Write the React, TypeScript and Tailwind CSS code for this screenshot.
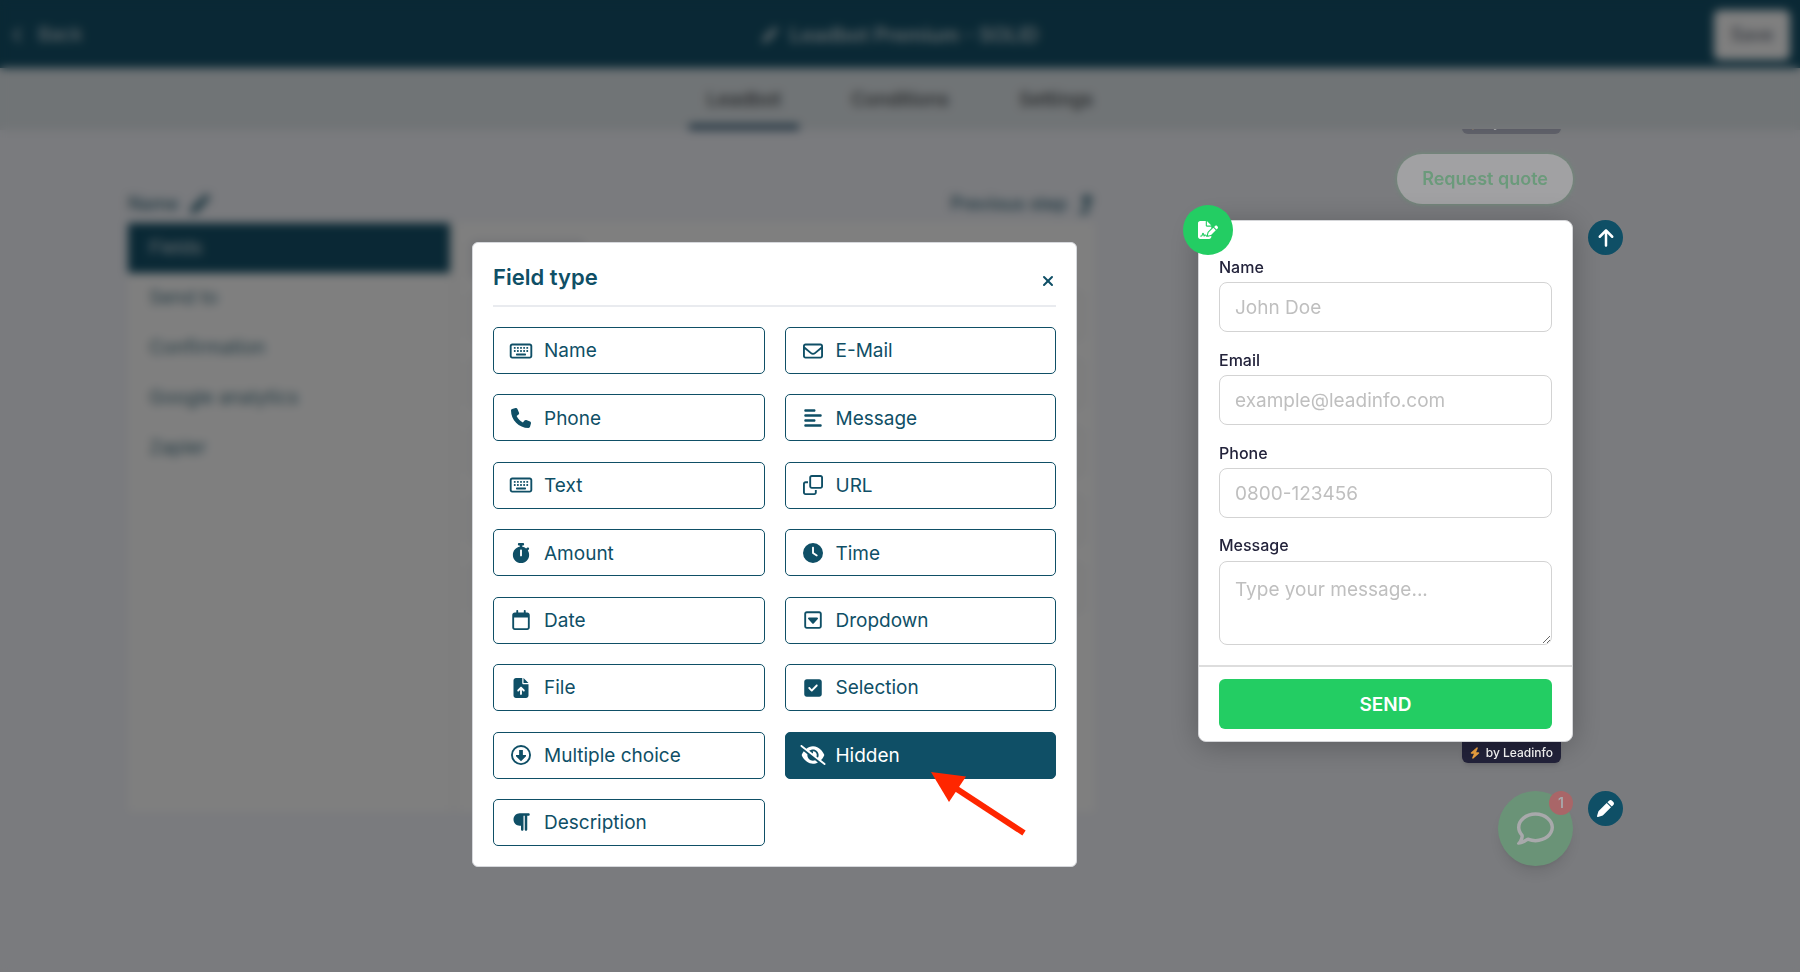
import { useState } from 'react'
import clsx from 'clsx'
import type { IconType } from 'react-icons'
import {
  FaAlignLeft,
  FaArrowUp,
  FaBolt,
  FaChevronLeft,
  FaClock,
  FaEyeSlash,
  FaFileArrowUp,
  FaFileSignature,
  FaParagraph,
  FaPen,
  FaPhone,
  FaRegCalendar,
  FaRegCircleDown,
  FaRegClone,
  FaRegComment,
  FaRegEnvelope,
  FaRegKeyboard,
  FaRegSquareCaretDown,
  FaSquareCheck,
  FaStopwatch,
  FaTurnUp,
} from 'react-icons/fa6'
import { X } from 'lucide-react'

const tabs = ['Leadbot', 'Conditions', 'Settings']

const menuItems = ['Fields', 'Send to', 'Confirmation', 'Google analytics', 'Zapier']

const fieldTypes: { label: string; icon: IconType }[] = [
  { label: 'Name', icon: FaRegKeyboard },
  { label: 'E-Mail', icon: FaRegEnvelope },
  { label: 'Phone', icon: FaPhone },
  { label: 'Message', icon: FaAlignLeft },
  { label: 'Text', icon: FaRegKeyboard },
  { label: 'URL', icon: FaRegClone },
  { label: 'Amount', icon: FaStopwatch },
  { label: 'Time', icon: FaClock },
  { label: 'Date', icon: FaRegCalendar },
  { label: 'Dropdown', icon: FaRegSquareCaretDown },
  { label: 'File', icon: FaFileArrowUp },
  { label: 'Selection', icon: FaSquareCheck },
  { label: 'Multiple choice', icon: FaRegCircleDown },
  { label: 'Hidden', icon: FaEyeSlash },
  { label: 'Description', icon: FaParagraph },
]

const formFields = [
  { id: 'name', label: 'Name', type: 'text', placeholder: 'John Doe' },
  { id: 'email', label: 'Email', type: 'email', placeholder: 'example@leadinfo.com' },
  { id: 'phone', label: 'Phone', type: 'tel', placeholder: '0800-123456' },
]

const Editor = () => (
  <div className="min-h-screen bg-[#f4f6fc] text-[#0f4f66]">
    <header className="flex h-[68px] items-center bg-[#14516a] px-2.5 pt-0.5 text-white">
      <div className="flex-1">
        <button className="flex items-center gap-3 text-[19px] opacity-80">
          <FaChevronLeft className="h-4 w-4" />
          Back
        </button>
      </div>
      <h1 className="flex items-center gap-3 text-xl font-semibold opacity-70">
        <FaPen className="h-4 w-4" />
        Leadbot Premium - SOLID
      </h1>
      <div className="flex flex-1 justify-end">
        <button className="h-[50px] rounded-md bg-white px-[17px] text-lg font-medium text-gray-500">Save</button>
      </div>
    </header>

    <nav className="flex h-[62px] justify-center gap-[34px] bg-[#e1e8ec]">
      {tabs.map((tab, index) => (
        <a
          key={tab}
          href="#"
          className={clsx(
            'flex items-center border-b-6 px-[18px] pt-2 text-[19px] font-medium text-[#4b5054]',
            index === 0 ? 'border-[#3f6580]' : 'border-transparent'
          )}
        >
          {tab}
        </a>
      ))}
    </nav>

    <main className="mr-[705px] ml-[128px] pt-[60px]">
      <div className="flex h-8 items-start justify-between text-lg font-medium opacity-80">
        <span className="flex items-center gap-3">
          Name
          <FaPen className="h-5 w-5" />
        </span>
        <span className="flex items-center gap-3">
          Previous step
          <FaTurnUp className="h-5 w-4" />
        </span>
      </div>
      <div className="flex h-[590px]">
        <ul className="w-[322px] bg-white pt-px text-[19px]">
          {menuItems.map((item, index) => (
            <li
              key={item}
              className={clsx(
                'flex h-[50px] items-center px-[21px]',
                index === 0 ? 'bg-[#14516a] text-white/80' : 'text-[#0f4f66]/80'
              )}
            >
              {item}
            </li>
          ))}
        </ul>
        <div className="flex-1 border-l-8 border-[#fafafa] bg-white px-3 pt-[18px]">
          <div className="h-10 w-[115px] rounded-md bg-[#e6e8ee]" />
          <div className="mt-3 flex flex-col gap-5">
            {menuItems.map(item => (
              <div key={item} className="h-12 rounded-md border-2 border-[#dfe2e8]" />
            ))}
          </div>
        </div>
      </div>
    </main>
  </div>
)

const PoweredBy = () => (
  <span className="mr-3 flex h-[21px] shrink-0 items-center gap-1.5 rounded-b-md bg-[#23233b] px-2 text-xs font-medium text-white shadow-md">
    <FaBolt className="h-3 w-2.5 text-[#f5a742]" />
    by Leadinfo
  </span>
)

const FieldTypeModal = () => {
  const [active, setActive] = useState('Hidden')

  return (
    <section
      role="dialog"
      aria-labelledby="field-type-title"
      className="mt-[242px] h-fit min-w-0 flex-1 rounded-md border border-[#d6d8dc] bg-white px-5 pb-5 text-[#0f4f66]"
    >
      <div className="flex h-16 items-center justify-between border-b-2 border-[#e9ebef] pt-1.5">
        <h2 id="field-type-title" className="text-[22px] font-semibold">Field type</h2>
        <button aria-label="Close" className="pt-2">
          <X size={16} strokeWidth={3} />
        </button>
      </div>

      <div className="mt-5 grid h-[519px] grid-cols-2 content-between gap-x-5">
        {fieldTypes.map(({ label, icon: Icon }) => (
          <div key={label} className="relative">
            <button
              onClick={() => setActive(label)}
              className={clsx(
                'flex h-[47px] w-full items-center gap-2.5 rounded-[5px] border border-[#0f4f66] px-3.5 text-[19px]',
                active === label && 'bg-[#0f4f66] text-white'
              )}
            >
              <Icon className="h-5 w-[26px]" />
              <span className="pt-0.5">{label}</span>
            </button>
            {label === 'Hidden' && (
              <svg
                viewBox="0 0 96 64"
                className="pointer-events-none absolute top-10 left-[146px] z-10 h-16 w-24"
                aria-hidden="true"
              >
                <path d="M22 14.5 93 61" stroke="#ff2600" strokeWidth="6" />
                <path d="M0 0 35 4.5 18 30Z" fill="#ff2600" />
              </svg>
            )}
          </div>
        ))}
      </div>
    </section>
  )
}

const Preview = () => (
  <aside className="mt-[129px] flex w-[425px] shrink-0 flex-col">
    <div className="flex h-[5px] w-[375px] items-end justify-end overflow-hidden opacity-30">
      <PoweredBy />
    </div>

    <div className="mt-5 flex w-[375px] justify-end">
      <button className="h-[50px] rounded-full bg-[#a1a1a3] px-[25px] text-lg font-semibold text-[#6b9a7b] shadow-[0_0_5px_#6b9177]">
        Request quote
      </button>
    </div>

    <div className="mt-4 flex items-start gap-[15px]">
      <form
        onSubmit={e => e.preventDefault()}
        className="relative flex-1 rounded-lg border border-[#d5d6d9] bg-white text-[#23233b] shadow-[0_4px_30px_rgba(0,0,0,0.25)]"
      >
        <span className="absolute -top-4 -left-4 flex h-[50px] w-[50px] items-center justify-center rounded-full bg-[#23cd63] text-white">
          <FaFileSignature className="h-[18px] w-5" />
        </span>
        <div className="flex flex-col gap-4 px-5 pt-[34px] pb-5">
          {formFields.map(field => (
            <div key={field.id}>
              <label htmlFor={field.id} className="block h-[27px] text-base leading-6 font-medium">
                {field.label}
              </label>
              <input
                id={field.id}
                type={field.type}
                placeholder={field.placeholder}
                className="block h-[50px] w-full rounded-lg border border-[#d3d3d3] px-[15px] pt-px text-[19px] placeholder:text-[#bfbfbf]"
              />
            </div>
          ))}
          <div>
            <label htmlFor="message" className="block h-[27px] text-base leading-[22px] font-medium">
              Message
            </label>
            <textarea
              id="message"
              placeholder="Type your message..."
              className="block h-[84px] w-full rounded-lg border border-[#d3d3d3] px-[15px] py-[14px] text-[19px] placeholder:text-[#bfbfbf]"
            />
          </div>
        </div>
        <div className="border-t-2 border-[#dddddd] px-5 py-3">
          <button className="h-[50px] w-full rounded-md bg-[#23cd63] pt-0.5 text-[19px] font-semibold text-white">
            SEND
          </button>
        </div>
      </form>
      <button
        aria-label="Move up"
        className="flex h-[35px] w-[35px] items-center justify-center rounded-full bg-[#0f4f66] text-white"
      >
        <FaArrowUp className="h-5 w-5" />
      </button>
    </div>

    <div className="flex w-[375px] justify-end">
      <PoweredBy />
    </div>

    <div className="mt-7 flex items-start justify-end gap-[15px]">
      <button
        aria-label="Open chat"
        className="relative flex h-[75px] w-[75px] items-center justify-center rounded-full bg-[#6a9377] text-[#a8a9ab] shadow-lg"
      >
        <FaRegComment className="h-[37px] w-[37px]" />
        <span className="absolute top-0 right-0 flex h-6 w-6 items-center justify-center rounded-full bg-[#a96668] text-sm font-semibold">
          1
        </span>
      </button>
      <button
        aria-label="Edit"
        className="flex h-[35px] w-[35px] items-center justify-center rounded-full bg-[#0f4f66] text-white"
      >
        <FaPen className="h-[17px] w-[17px]" />
      </button>
    </div>
  </aside>
)

export default function App() {
  return (
    <div className="font-['Inter',sans-serif]">
      <Editor />
      <div className="fixed inset-0 flex gap-[121px] overflow-hidden bg-black/50 pr-[177px] pl-[472px] backdrop-blur-[5px]">
        <FieldTypeModal />
        <Preview />
      </div>
    </div>
  )
}
